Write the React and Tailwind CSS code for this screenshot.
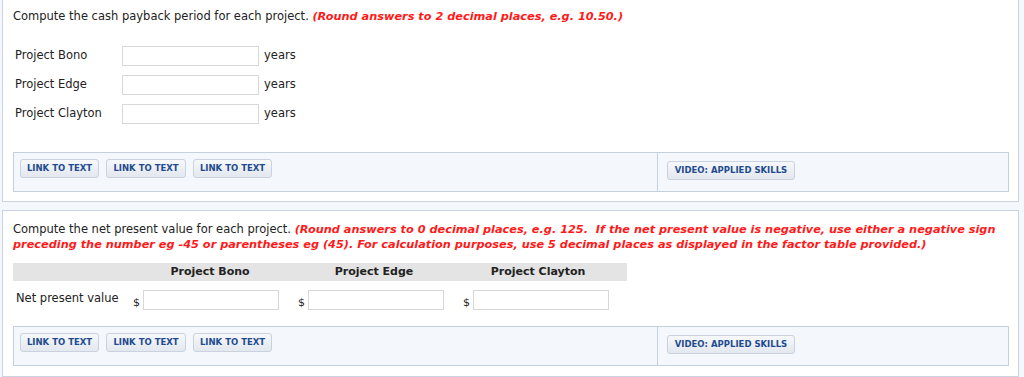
export default function App() {
  const font = { fontFamily: '"DejaVu Sans", Verdana, sans-serif' };
  const Btn = ({ children, cls = "" }) => (
    <div className={`flex items-center justify-center whitespace-nowrap h-[19px] rounded-[3px] border border-[#c9d2de] bg-gradient-to-b from-[#f6f8fb] to-[#e3e8ef] text-[8.5px] font-bold text-[#1f4b8e] ${cls}`}>{children}</div>
  );
  const Links = () => (
    <div className="flex h-[40px] border border-[#c5d0df] bg-[#f4f7fb] ml-[10px] mr-[9px]">
      <div className="flex w-[644px] items-start gap-[7px] pt-[6px] pl-[6px] border-r border-[#c5d0df]">
        <Btn cls="w-[79px]">LINK TO TEXT</Btn>
        <Btn cls="w-[80px]">LINK TO TEXT</Btn>
        <Btn cls="w-[79px]">LINK TO TEXT</Btn>
      </div>
      <div className="pt-[8px] pl-[9px]">
        <Btn cls="w-[128px]">VIDEO: APPLIED SKILLS</Btn>
      </div>
    </div>
  );
  const Row = ({ label }) => (
    <div className="flex items-center h-[20px]">
      <div className="w-[107px] text-[11.5px]">{label}</div>
      <div className="w-[137px] h-[20px] border border-[#d8d8d8] bg-white"></div>
      <div className="ml-[5px] text-[11.5px]">years</div>
    </div>
  );
  const Dollar = () => (
    <div className="flex items-end">
      <span className="text-[11px] mr-[3px] leading-[14px]">$</span>
      <div className="w-[136px] h-[20px] border border-[#d8d8d8] bg-white"></div>
    </div>
  );
  return (
    <div style={font} className="w-[1024px] h-[377px] bg-[#f4f7fb] text-[#222] overflow-hidden">
      <div className="ml-[2px] w-[1017px] h-[202px] bg-white border-x border-b border-[#c9d3e2] pt-[9px]">
        <div className="pl-[10px] text-[11.5px] leading-[14px] whitespace-nowrap">
          Compute the cash payback period for each project.{" "}
          <span className="text-[#ff1a1a] font-bold italic text-[11.3px]">(Round answers to 2 decimal places, e.g. 10.50.)</span>
        </div>
        <div className="pl-[12px] mt-[22px] flex flex-col gap-[9px]">
          <Row label="Project Bono" />
          <Row label="Project Edge" />
          <Row label="Project Clayton" />
        </div>
        <div className="mt-[28px]">
          <Links />
        </div>
      </div>
      <div className="ml-[2px] mt-[8px] w-[1017px] h-[167px] bg-white border border-[#c9d3e2] pt-[11px]">
        <div className="pl-[10px] text-[11.5px] leading-[14px] whitespace-nowrap">
          Compute the net present value for each project.{" "}
          <span className="text-[#ff1a1a] font-bold italic text-[11.3px]">
            (Round answers to 0 decimal places, e.g. 125.&nbsp; If the net present value is negative, use either a negative sign<br />preceding the number eg -45 or parentheses eg (45). For calculation purposes, use 5 decimal places as displayed in the factor table provided.)
          </span>
        </div>
        <div className="ml-[10px] mt-[11px] w-[614px] h-[18px] bg-[#e4e4e4] flex items-center text-[11px] font-bold">
          <div className="w-[130px]"></div>
          <div className="w-[134px] text-center">Project Bono</div>
          <div className="w-[30px]"></div>
          <div className="w-[134px] text-center">Project Edge</div>
          <div className="w-[30px]"></div>
          <div className="w-[134px] text-center">Project Clayton</div>
        </div>
        <div className="flex items-start mt-[9px] pl-[13px]">
          <div className="w-[117px] text-[11.5px] leading-[14px] mt-[1px]">Net present value</div>
          <div className="flex gap-[19px]">
            <Dollar />
            <Dollar />
            <Dollar />
          </div>
        </div>
        <div className="mt-[16px]">
          <Links />
        </div>
      </div>
    </div>
  );
}
